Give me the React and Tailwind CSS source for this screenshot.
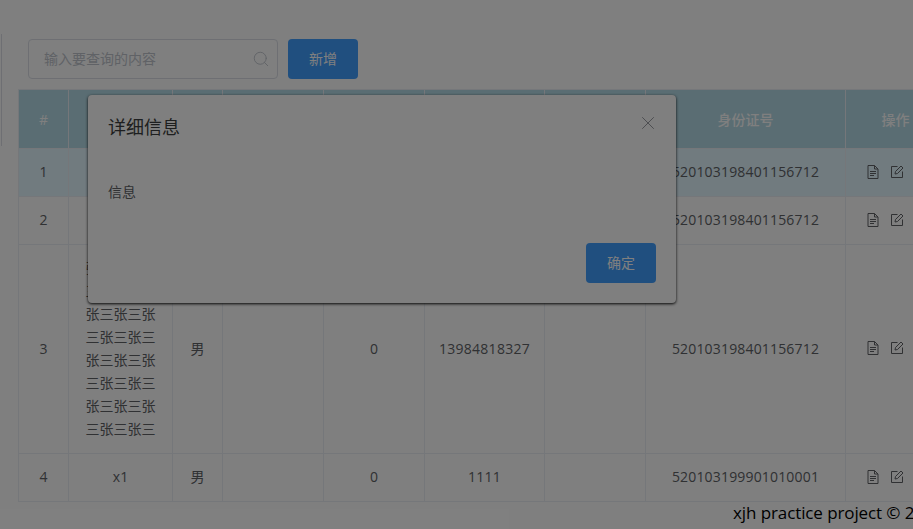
import { Search, X } from "lucide-react";

const cols = [50, 104, 50, 101, 101, 120, 101, 200, 100];
const headers = ["#", "姓名", "性别", "年龄", "状态", "手机号", "邮箱", "身份证号", "操作"];
const longName = "张三张三张三张三张三张三张三张三张三张三张三张三张三张三张三张三张三张三张三张三";

const rows = [
  { id: 1, name: "张三", sex: "男", num: "0", phone: "13984818327", card: "520103198401156712", active: true },
  { id: 2, name: "张三", sex: "男", num: "0", phone: "13984818327", card: "520103198401156712" },
  { id: 3, name: longName, sex: "男", num: "0", phone: "13984818327", card: "520103198401156712" },
  { id: 4, name: "x1", sex: "男", num: "0", phone: "1111", card: "520103199901010001" },
];

function DocIcon() {
  return (
    <svg width="14" height="14" viewBox="0 0 14 14" fill="none" stroke="currentColor" strokeWidth="1">
      <path d="M2 .5h6.500l3.500 3.500v9.500h-10z" />
      <path d="M8.500 .5v3.500h3.500M4 6.500h6M4 8.500h6M4 10.500h4" />
    </svg>
  );
}

function EditIcon() {
  return (
    <svg width="14" height="14" viewBox="0 0 14 14" fill="none" stroke="currentColor" strokeWidth="1">
      <path d="M7.500 1.500h-6v11h11v-6" />
      <path d="M5 9l.5-2.500 5.500-5.500 2 2-5.500 5.500z" />
    </svg>
  );
}

function Cell({ children, className = "" }) {
  return <td className={"border-r border-b border-[#ebeef5] text-center align-middle px-2.5 pt-[11px] pb-[13px] leading-[23px] " + className}>{children}</td>;
}

export default function App() {
  return (
    <div className="relative w-[913px] h-[529px] overflow-hidden bg-white text-[14px] text-[#606266] font-['Open_Sans','Noto_Sans_CJK_SC',sans-serif]">
      <div className="absolute left-0 top-[34px] w-[2px] h-[112px] border-r border-[#dcdfe6]" />

      <div className="pl-[18px] pt-[39px]">
        <div className="flex gap-2.5 pl-2.5 mb-2.5">
          <div className="flex items-center justify-between w-[250px] h-10 border border-[#dcdfe6] rounded pl-[15px] pr-[7px]">
            <span className="text-[#c0c4cc] pb-0.5">输入要查询的内容</span>
            <Search size={18} strokeWidth={1.2} className="text-[#c0c4cc] -mt-px" />
          </div>
          <button className="w-[70px] h-10 pb-0.5 rounded bg-[#409eff] text-white">新增</button>
        </div>

        <table className="table-fixed border-separate border-spacing-0 w-[928px] border-l border-[#ebeef5]">
          <colgroup>
            {cols.map((w, i) => <col key={i} style={{ width: w }} />)}
          </colgroup>
          <thead>
            <tr className="bg-[#b4dae6] text-white h-[60px]">
              {headers.map((h) => (
                <th key={h} className="border-r border-t border-b border-[#ebeef5] font-medium text-center text-white whitespace-nowrap">{h}</th>
              ))}
            </tr>
          </thead>
          <tbody>
            {rows.map((r) => (
              <tr key={r.id} className={r.active ? "bg-[#e2f6ff]" : ""}>
                <Cell>{r.id}</Cell>
                <Cell><div className="w-[70px] mx-auto break-all">{r.name}</div></Cell>
                <Cell>{r.sex}</Cell>
                <Cell />
                <Cell>{r.num}</Cell>
                <Cell className="tracking-[0.25px]">{r.phone}</Cell>
                <Cell />
                <Cell className="whitespace-nowrap tracking-[0.17px]">{r.card}</Cell>
                <Cell>
                  <div className="flex gap-2.5 pl-2.5">
                    <DocIcon />
                    <EditIcon />
                  </div>
                </Cell>
              </tr>
            ))}
          </tbody>
        </table>
      </div>

      <div className="absolute left-[733px] top-[500px] text-[17px] tracking-[-0.1px] text-black whitespace-nowrap z-20">xjh practice project © 2019</div>

      <div className="absolute left-[88px] top-[95px] w-[588px] h-[208px] bg-white rounded-sm shadow-[0_1px_3px_rgba(0,0,0,0.95)] flex flex-col z-0">
        <div className="flex items-start justify-between pl-5 pr-[17px] pt-[17px] h-[59px]">
          <span className="text-[18px] leading-[30px] text-[#3c3e40]">详细信息</span>
          <X size={22} strokeWidth={1} className="text-[#909399]" />
        </div>
        <div className="px-5 pt-[27px] text-[14px]">信息</div>
        <div className="flex justify-end mt-auto pr-5 pb-5">
          <button className="w-[70px] h-10 pb-0.5 rounded bg-[#409eff] text-white">确定</button>
        </div>
      </div>

      <div className="absolute inset-0 bg-black/50 z-10" />
    </div>
  );
}
